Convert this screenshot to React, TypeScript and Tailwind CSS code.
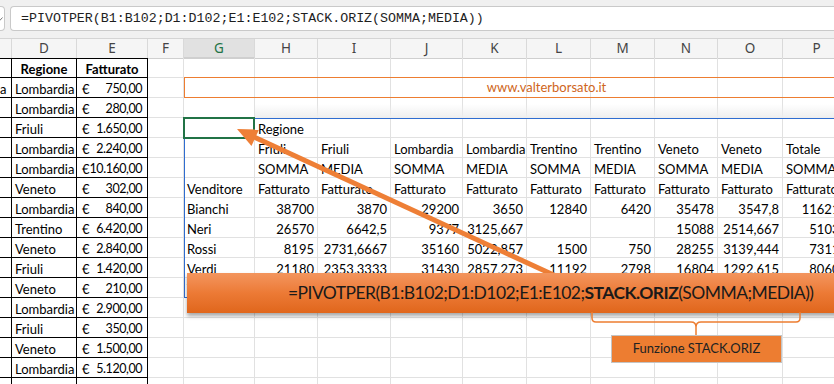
import React from 'react';

const WIDTHS = ['w-[12px]', 'w-[65px]', 'w-[71px]', 'w-[36px]', 'w-[71px]', 'w-[63px]', 'w-[73px]', 'w-[72px]', 'w-[64px]', 'w-[64px]', 'w-[64px]', 'w-[63px]', 'w-[65px]', 'w-[68px]'];
const LETTERS = ['', 'D', 'E', 'F', 'G', 'H', 'I', 'J', 'K', 'L', 'M', 'N', 'O', 'P'];

const LEFT: [string, string][] = [
  ['Regione', 'Fatturato'],
  ['Lombardia', '750,00'],
  ['Lombardia', '280,00'],
  ['Friuli', '1.650,00'],
  ['Lombardia', '2.240,00'],
  ['Lombardia', '10.160,00'],
  ['Veneto', '302,00'],
  ['Lombardia', '840,00'],
  ['Trentino', '6.420,00'],
  ['Veneto', '2.840,00'],
  ['Friuli', '1.420,00'],
  ['Veneto', '210,00'],
  ['Lombardia', '2.900,00'],
  ['Friuli', '350,00'],
  ['Veneto', '1.500,00'],
  ['Lombardia', '5.120,00'],
  ['', ''],
];

const F = 'Fatturato';
const PIVOT: string[][] = [
  ['', 'Regione', '', '', '', '', '', '', '', ''],
  ['', 'Friuli', 'Friuli', 'Lombardia', 'Lombardia', 'Trentino', 'Trentino', 'Veneto', 'Veneto', 'Totale'],
  ['', 'SOMMA', 'MEDIA', 'SOMMA', 'MEDIA', 'SOMMA', 'MEDIA', 'SOMMA', 'MEDIA', 'SOMMA'],
  ['Venditore', F, F, F, F, F, F, F, F, F],
  ['Bianchi', '38700', '3870', '29200', '3650', '12840', '6420', '35478', '3547,8', '116218'],
  ['Neri', '26570', '6642,5', '9377', '3125,667', '', '', '15088', '2514,667', '51035'],
  ['Rossi', '8195', '2731,6667', '35160', '5022,857', '1500', '750', '28255', '3139,444', '73110'],
  ['Verdi', '21180', '2353,3333', '31430', '2857,273', '11192', '2798', '16804', '1292,615', '80606'],
  ['Totale', '94645', '3640,1923', '105167', '3757,607', '25532', '3191,5', '95625', '2391,3', '320969'],
];

const isNum = (s: string) => /^[\d.,]+$/.test(s);

function Cell({ i, className = '', children }: { i: number; className?: string; children?: React.ReactNode }) {
  const border = i < 3 ? 'border-black' : 'border-[#e1e1e1]';
  return (
    <div className={`${WIDTHS[i]} h-[20px] shrink-0 overflow-hidden whitespace-nowrap border-b border-r ${border} px-[3px] pt-[3px] leading-[16px] ${className}`}>
      {children}
    </div>
  );
}

function SheetRow({ r }: { r: number }) {
  const [region, amount] = LEFT[r];
  const pv = r >= 3 && r <= 11 ? PIVOT[r - 3] : null;
  return (
    <div className="flex h-[20px]">
      <Cell i={0} className="pr-[8px] pl-0 text-right">{r === 1 ? 'a' : ''}</Cell>
      <Cell i={1} className={r === 0 ? 'text-center font-bold' : ''}>{region}</Cell>
      {r === 0 ? (
        <Cell i={2} className="text-center font-bold">{amount}</Cell>
      ) : (
        <Cell i={2} className="flex justify-between pl-[5px] pr-[5px]">
          {amount && <span>€</span>}
          <span className="text-[12.5px] tracking-[-0.45px]">{amount}</span>
        </Cell>
      )}
      <Cell i={3} />
      {Array.from({ length: 10 }).map((_, j) => {
        const v = pv ? pv[j] : '';
        return (
          <Cell key={j} i={4 + j} className={isNum(v) ? 'text-right' : ''}>
            {v}
          </Cell>
        );
      })}
    </div>
  );
}

export default function App() {
  return (
    <div className="relative h-[384px] w-[834px] overflow-hidden bg-white font-['Lato',sans-serif] text-[13px] text-black">
      {/* formula bar */}
      <div className="flex h-[38px] items-start bg-[#f0f0f0] pt-[6px]">
        <div className="relative h-[25px] w-[5px] shrink-0 rounded-r-[4px] border-y border-r border-[#c9c9c9] bg-white">
          <svg className="absolute left-[-4px] top-[10px]" width="7" height="5" viewBox="0 0 7 5">
            <path d="M0.5 0.5 L3.5 3.8 L6.5 0.5" fill="none" stroke="#777" strokeWidth="1" />
          </svg>
        </div>
        <div className="ml-[5px] flex h-[25px] flex-1 items-center rounded-l-[4px] border-y border-l border-[#c9c9c9] bg-white pl-[10px] font-['Liberation_Mono',monospace] text-[13.3px] text-[#1e1e1e]">
          =PIVOTPER(B1:B102;D1:D102;E1:E102;STACK.ORIZ(SOMMA;MEDIA))
        </div>
      </div>

      {/* column headers */}
      <div className="flex h-[20px] border-t border-[#d4d4d4] bg-[#f5f5f5] font-['Noto_Sans',sans-serif] text-[13.5px] text-[#444]">
        {LETTERS.map((l, i) => (
          <div
            key={i}
            className={`${WIDTHS[i]} flex h-[20px] shrink-0 items-center justify-center border-r border-[#d9d9d9] ${i < 3 ? 'border-b border-b-black' : 'border-b border-b-[#cfcfcf]'} ${l === 'G' ? 'border-b-2 border-b-[#217346] bg-[#e1e1e1] text-[#217346]' : ''}`}
          >
            {l}
          </div>
        ))}
      </div>

      {/* grid */}
      <div>
        {LEFT.map((_, r) => (
          <SheetRow key={r} r={r} />
        ))}
      </div>

      {/* www box */}
      <div className="absolute left-[184px] top-[77px] flex h-[21px] w-[725px] items-center justify-center border border-[#ed7d31] pt-[1px] text-[#cf6520]">
        www.valterborsato.it
      </div>

      {/* soft shadow above spill range */}
      <div className="absolute left-[255px] right-0 top-[104px] h-[14px] bg-gradient-to-b from-transparent to-[#eeeeee]" />

      {/* spill range */}
      <div className="absolute left-[184px] right-[-10px] top-[118px] h-[180px] border border-[#2f6dd0]" />

      {/* selected cell */}
      <div className="absolute left-[183px] top-[117px] h-[22px] w-[72px] border-2 border-[#217346]" />

      {/* arrow */}
      <svg className="pointer-events-none absolute left-0 top-0" width="834" height="384">
        <line x1="558" y1="277" x2="252" y2="136" stroke="#ee7f36" strokeWidth="5" />
        <polygon points="237,129 259,129.5 251.5,146" fill="#ee7f36" />
      </svg>

      {/* formula banner */}
      <div className="absolute left-[187px] top-[273px] flex h-[40px] w-[700px] items-center bg-gradient-to-b from-[#f3955d] via-[#ec7a35] to-[#e0661b] pl-[101px] text-[17.5px] tracking-[-0.55px] text-[#1a1a1a] shadow-[0_3px_4px_rgba(0,0,0,0.35)]">
        =PIVOTPER(B1:B102;D1:D102;E1:E102;<b>STACK.ORIZ</b>(SOMMA;MEDIA))
      </div>

      {/* bracket */}
      <svg className="pointer-events-none absolute left-0 top-0" width="834" height="384">
        <path
          d="M592 312 V318 Q592 322 596 322 H691 Q696 322 696 327 V335 M696 327 Q696 322 701 322 H796 Q800 322 800 318 V312"
          fill="none"
          stroke="#ed7d31"
          strokeWidth="1.5"
        />
      </svg>

      {/* label */}
      <div className="absolute left-[611px] top-[335px] flex h-[28px] w-[171px] items-center justify-center border border-[#c4c4c4] bg-[#ed7d31] text-[13px] text-[#222]">
        Funzione STACK.ORIZ
      </div>
    </div>
  );
}
